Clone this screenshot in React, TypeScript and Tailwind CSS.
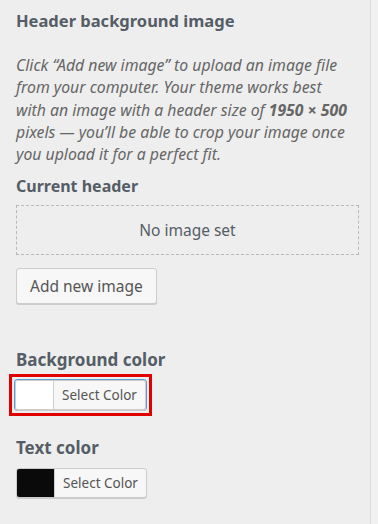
import React from "react";

function ColorButton({ swatch }: { swatch: string }) {
  return (
    <button
      type="button"
      className="flex h-[30px] w-[131px] items-stretch overflow-hidden rounded-[3px] border border-[#ccc] bg-[#f7f7f7] p-0 shadow-[0_1px_0_#ccc]"
    >
      <span className={`w-[38px] shrink-0 border-r border-[#ccc] ${swatch}`}></span>
      <span className="flex flex-1 items-center justify-center text-[13.5px] text-[#555]">Select Color</span>
    </button>
  );
}

export default function App() {
  const font = { fontFamily: '"Noto Sans", "Open Sans", sans-serif' };

  return (
    <div className="flex h-[524px] w-full bg-[#f1f1f1]" style={font}>
      <div className="w-[371px] shrink-0 border-r border-[#dddddd] bg-[#eeeeee] pl-4 pr-3 text-[#555d66]">
        {/* Header image section */}
        <h2 className="mt-[9px] text-[16.5px] font-bold leading-[24px]">Header background image</h2>
        <p className="mt-[21px] whitespace-nowrap text-[15.8px] italic leading-[22.3px] text-[#666]">
          Click “Add new image” to upload an image file
          <br />
          from your computer. Your theme works best
          <br />
          with an image with a header size of <strong className="font-bold">1950 × 500</strong>
          <br />
          pixels — you’ll be able to crop your image once
          <br />
          you upload it for a perfect fit.
        </p>

        <h3 className="mt-[9px] text-[16px] font-bold leading-[24px]">Current header</h3>
        <div className="mt-[7px] mr-[-1px] flex h-[50px] items-center justify-center border border-dashed border-[#b4b9be] text-[15.5px] text-[#555d66]">
          No image set
        </div>

        <button
          type="button"
          className="mt-[13px] h-[36px] rounded-[3px] border border-[#ccc] bg-[#f7f7f7] px-[13px] text-[15.5px] text-[#555] shadow-[0_1px_0_#ccc]"
        >
          Add new image
        </button>

        {/* Background color */}
        <h3 className="mt-[44px] text-[17px] font-bold leading-[24px]">Background color</h3>
        <div className="mt-[2px] ml-[-7px] inline-flex border-[3px] border-[#e00000] p-[3px]">
          <div className="rounded-[3px] ring-1 ring-[#5b9dd9]">
            <ColorButton swatch="bg-white" />
          </div>
        </div>

        {/* Text color */}
        <h3 className="mt-[20px] text-[17px] font-bold leading-[24px]">Text color</h3>
        <div className="mt-[8px]">
          <ColorButton swatch="bg-[#0a0a0a]" />
        </div>
      </div>
    </div>
  );
}
